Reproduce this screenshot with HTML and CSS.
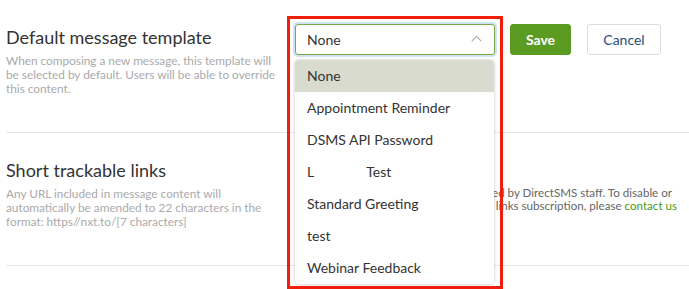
FILE: index.html
```html
<!DOCTYPE html>
<html>
<head>
<meta charset="utf-8">
<link rel="stylesheet" href="styles.css">
</head>
<body>
<div class="page">
  <div class="row">
    <div class="info">
      <h2 class="title">Default message template</h2>
      <p class="desc">When composing a new message, this template will be selected by default. Users will be able to override this content.</p>
    </div>
    <div class="controls">
      <div class="select-wrap">
        <div class="select">
          <span class="select-value">None</span>
          <svg class="chevron" width="11" height="7" viewBox="0 0 11 7"><path d="M0.8 6.2 L5.5 1.2 L10.2 6.2" fill="none" stroke="#a8a8a8" stroke-width="1.1"/></svg>
        </div>
        <ul class="menu">
          <li class="opt active">None</li>
          <li class="opt">Appointment Reminder</li>
          <li class="opt">DSMS API Password</li>
          <li class="opt">L<span class="gap"></span>Test</li>
          <li class="opt">Standard Greeting</li>
          <li class="opt">test</li>
          <li class="opt">Webinar Feedback</li>
        </ul>
      </div>
      <button class="btn btn-save">Save</button>
      <button class="btn btn-cancel">Cancel</button>
    </div>
  </div>
  <div class="row">
    <div class="info">
      <h2 class="title">Short trackable links</h2>
      <p class="desc">Any URL included in message content will automatically be amended to 22 characters in the format: https//nxt.to/[7 characters]</p>
    </div>
    <div class="note">
      <span class="line line-1">Short trackable links have been enabled by DirectSMS staff. To disable or</span>
      <span class="line line-2">change your short trackable links subscription, please <a class="link" href="#">contact us</a></span>
    </div>
  </div>
  <div class="highlight"></div>
</div>
</body>
</html>
```

FILE: styles.css
```css
* { box-sizing: border-box; }
html, body { margin: 0; padding: 0; background: #fff; }
body { font-family: Lato, "Open Sans", sans-serif; color: #333; }
.page { position: relative; padding-left: 6px; width: 689px; height: 289px; overflow: hidden; }
.row {
  display: grid;
  grid-template-columns: 289px 1fr;
  height: 133px;
  padding-top: 24px;
  border-bottom: 1px solid #e6e6e6;
}
.info { padding-top: 2px; }
.title { margin: 0; font-size: 18px; line-height: 22px; font-weight: 400; color: #333; }
.desc { margin: 6px 0 0; font-size: 11.8px; line-height: 13.8px; color: #aaa; width: 278px; }
.controls { display: flex; align-items: flex-start; }
.select-wrap { position: relative; width: 200px; }
.select {
  height: 31px;
  border: 1px solid #78a843;
  border-radius: 3px;
  box-shadow: 0 0 0 2px #cfe2f3;
  display: flex;
  align-items: center;
  justify-content: space-between;
  padding: 0 12px 0 11px;
  font-size: 14px;
  color: #333;
}
.chevron { display: block; margin-top: -2px; }
.menu {
  position: absolute;
  top: 36px;
  left: 0;
  width: 199px;
  margin: 0;
  padding: 0;
  list-style: none;
  background: #fff;
  border-radius: 4px;
  box-shadow: 0 0 3px rgba(0,0,0,0.18), 0 1px 4px rgba(0,0,0,0.08);
  z-index: 2;
  overflow: hidden;
}
.opt { height: 32px; line-height: 32px; padding-left: 12px; font-size: 14px; color: #333; }
.opt.active { background: #d9dbce; }
.gap { display: inline-block; width: 52px; }
.btn {
  height: 31px;
  border-radius: 3px;
  font-family: Lato, "Open Sans", sans-serif;
  font-size: 14px;
  padding: 0;
  cursor: pointer;
}
.btn-save { margin-left: 15px; width: 61px; background: #5b9b22; border: 1px solid #5b9b22; color: #fff; font-weight: 700; }
.btn-cancel { margin-left: 16px; width: 74px; background: #fff; border: 1px solid #dcdcdc; color: #1e4d7b; }
.note { padding-top: 29px; font-size: 11.6px; line-height: 13.4px; color: #666; text-align: right; overflow: hidden; }
.line { display: block; white-space: nowrap; }
.line-1 { padding-right: 17px; }
.line-2 { padding-right: 12px; }
.link { color: #4c9a16; text-decoration: none; }
.highlight {
  position: absolute;
  left: 287px;
  top: 16px;
  width: 216px;
  height: 273px;
  border: 3px solid #f01e0a;
  z-index: 3;
  pointer-events: none;
}
```
